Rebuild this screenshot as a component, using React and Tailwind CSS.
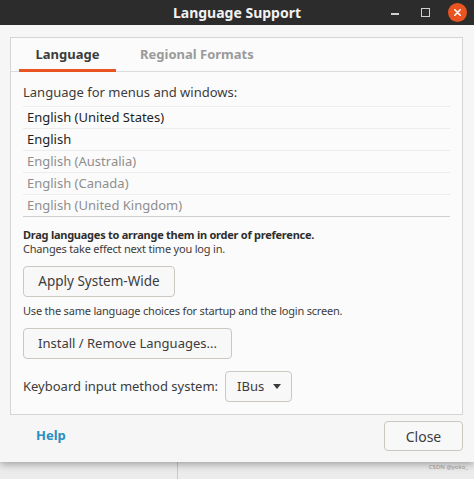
const langs = [
  { name: 'English (United States)', active: true },
  { name: 'English', active: true },
  { name: 'English (Australia)', active: false },
  { name: 'English (Canada)', active: false },
  { name: 'English (United Kingdom)', active: false },
]

export default function App() {
  return (
    <div className="relative w-[474px] h-[479px] overflow-hidden bg-[#dedede] font-['Noto_Sans',sans-serif] text-[#3c3c3c]">
      {/* window */}
      <div className="flex flex-col h-[462px] bg-[#f6f6f6] shadow-[0_2px_8px_rgba(0,0,0,0.35)] relative z-10">
        {/* title bar */}
        <div className="relative flex items-center justify-center h-[25px] bg-[#2c2c2c]">
          <span className="text-[14px] font-bold text-[#f2f2f2]">Language Support</span>
          <div className="absolute right-[7px] top-0 h-full flex items-center">
            <span className="block w-[8px] h-[1.5px] bg-[#cfcfcf] mt-[3px] mr-[22px]" />
            <span className="block w-[9px] h-[9px] border border-[#cfcfcf] mr-[18px]" />
            <span className="flex items-center justify-center w-[19px] h-[19px] rounded-full bg-[#e95420]">
              <svg width="9" height="9" viewBox="0 0 10 10">
                <path d="M2 2 L8 8 M8 2 L2 8" stroke="#fff" strokeWidth="1.8" strokeLinecap="round" />
              </svg>
            </span>
          </div>
        </div>

        {/* body */}
        <div className="flex flex-col flex-1 px-[10px] pt-[12px]">
          <div className="flex flex-col w-[453px] border border-[#d5d5d5] bg-[#fbfbfb]">
            {/* tabs */}
            <div className="flex h-[34px] border-b border-[#dcdcdc] px-[8px]">
              <div className="relative flex items-center justify-center w-[97px] text-[13px] font-bold text-[#3c3c3c]">
                Language
                <span className="absolute left-0 right-0 bottom-[-1px] h-[3px] bg-[#e95420]" />
              </div>
              <div className="flex items-center px-[24px] text-[13px] font-bold text-[#9a9a9a]">
                Regional Formats
              </div>
            </div>

            <div className="flex flex-col px-[12px] pt-[11px] pb-[12px]">
              <div className="text-[13px] leading-[18px]">Language for menus and windows:</div>
              <div className="flex flex-col mt-[5px] border-b border-[#cfcfcf]">
                {langs.map((l) => (
                  <div
                    key={l.name}
                    className={`h-[22px] flex items-center pl-[4px] text-[13px] border-t border-[#ececec] ${l.active ? 'text-[#1e1e1e]' : 'text-[#8e8e8e]'}`}
                  >
                    {l.name}
                  </div>
                ))}
              </div>

              <div className="mt-[11px] text-[11px] leading-[14px] tracking-[-0.25px] font-bold text-[#2e2e2e]">
                Drag languages to arrange them in order of preference.
              </div>
              <div className="text-[11px] leading-[14px] tracking-[-0.2px]">Changes take effect next time you log in.</div>

              <button className="mt-[10px] self-start h-[31px] w-[152px] rounded-[4px] border border-[#cdc7c2] bg-[#f8f8f8] text-[13.5px] text-[#3c3c3c]">
                Apply System-Wide
              </button>
              <div className="mt-[7px] text-[11px] leading-[14px] tracking-[-0.2px]">
                Use the same language choices for startup and the login screen.
              </div>
              <button className="mt-[10px] self-start h-[31px] w-[209px] rounded-[4px] border border-[#cdc7c2] bg-[#f8f8f8] text-[13px] text-[#3c3c3c]">
                Install / Remove Languages...
              </button>

              <div className="flex items-center mt-[12px] gap-[7px]">
                <span className="text-[13px]">Keyboard input method system:</span>
                <div className="flex items-center h-[31px] w-[67px] rounded-[4px] border border-[#cdc7c2] bg-[#f8f8f8] pl-[11px] gap-[9px]">
                  <span className="text-[13px]">IBus</span>
                  <svg width="8" height="5" viewBox="0 0 8 5">
                    <path d="M0 0 L8 0 L4 5 Z" fill="#3c3c3c" />
                  </svg>
                </div>
              </div>
            </div>
          </div>

          {/* footer */}
          <div className="flex items-center justify-between mt-[6px] pl-[26px] w-[453px]">
            <span className="text-[13px] font-bold text-[#2a8fc1]">Help</span>
            <button className="h-[30px] w-[79px] rounded-[4px] border border-[#cdc7c2] bg-[#f8f8f8] text-[14px] text-[#3c3c3c]">
              Close
            </button>
          </div>
        </div>
      </div>

      {/* background behind window */}
      <div className="flex h-[17px] bg-[#ececec]">
        <div className="w-[178px] border-r border-[#c8c8c8]" />
        <div className="flex-1 flex items-start justify-end pr-[6px]">
          <span className="text-[6px] text-[#9a9a9a] leading-[8px] mt-[1px]">CSDN @yoko_</span>
        </div>
      </div>
    </div>
  )
}
